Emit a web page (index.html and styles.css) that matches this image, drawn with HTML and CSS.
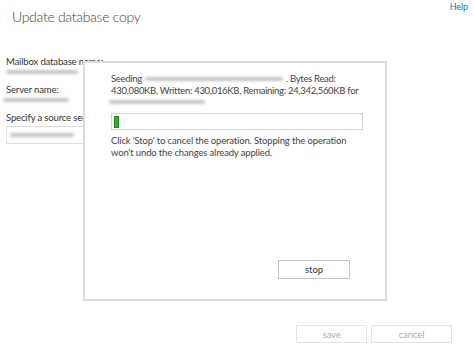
FILE: index.html
```html
<!DOCTYPE html>
<html>
<head>
<meta charset="utf-8">
<link rel="stylesheet" href="styles.css">
</head>
<body>
<div class="page">
  <div class="header">
    <h1 class="title">Update database copy</h1>
    <a class="help">Help</a>
  </div>
  <div class="form">
    <div class="label">Mailbox database name:</div>
    <div class="redact r1"></div>
    <div class="label">Server name:</div>
    <div class="redact r2"></div>
    <div class="label">Specify a source server:</div>
    <div class="input"><div class="redact r3"></div></div>
  </div>
  <div class="footer">
    <button class="btn save">save</button>
    <button class="btn cancel">cancel</button>
  </div>
</div>
<div class="dialog">
  <div class="msg">
    <div class="line1"><span>Seeding</span><span class="redact inline"></span><span>. Bytes Read:</span></div>
    <div>430,080KB, Written: 430,016KB, Remaining: 24,342,560KB for</div>
    <div class="redact r4"></div>
  </div>
  <div class="progress"><div class="fill"></div></div>
  <div class="note">Click 'Stop' to cancel the operation. Stopping the operation won't undo the changes already applied.</div>
  <div class="dlg-foot"><button class="stop">stop</button></div>
</div>
</body>
</html>
```
FILE: styles.css
```css
html, body { margin: 0; padding: 0; background: #fff; }
body { font-family: Lato, "Noto Sans", sans-serif; color: #333; width: 474px; height: 348px; overflow: hidden; position: relative; }
.page { display: flex; flex-direction: column; height: 348px; box-sizing: border-box; }
.header { display: flex; justify-content: space-between; align-items: flex-start; padding: 0 6px 0 12px; height: 26px; }
.title { margin: 8px 0 0 0; font-size: 14px; line-height: 18px; font-weight: 300; color: #444; letter-spacing: -0.3px; }
.help { font-size: 9px; color: #1f6fc0; margin-top: 1px; letter-spacing: -0.1px; }
.form { padding: 0 0 0 6px; margin-top: 29px; font-size: 9.5px; letter-spacing: -0.15px; }
.label { line-height: 13px; height: 13px; color: #333; white-space: nowrap; }
.redact { background: #c4c4c4; border-radius: 3px; filter: blur(1.5px); }
.r1 { width: 72px; height: 4px; margin: 2px 0 9px 0; }
.r2 { width: 66px; height: 4px; margin: 2px 0 9px -3px; }
.r3 { width: 64px; height: 4px; margin: 6px 0 0 3px; }
.input { width: 78px; height: 16px; border: 1px solid #ddd; margin: 2px 0 0 0; }
.footer { margin-top: auto; display: flex; justify-content: flex-end; gap: 4px; padding: 0 22px 5px 0; }
.btn { font-family: inherit; font-size: 9.5px; letter-spacing: -0.1px; color: #aaa; background: #fff; border: 1px solid #e4e4e4; height: 18px; padding: 0; }
.save { width: 71px; }
.cancel { width: 81px; }
.dialog { position: absolute; left: 83px; top: 61px; width: 304px; height: 240px; box-sizing: border-box; border: 2px solid #dcdcdc; background: #fff; padding: 10px 26px 20px 26px; display: flex; flex-direction: column; font-size: 9.5px; letter-spacing: -0.15px; line-height: 12px; color: #444; }
.msg { width: 252px; white-space: nowrap; letter-spacing: -0.3px; }
.line1 { display: flex; align-items: center; gap: 3px; }
.inline { display: block; width: 138px; height: 4px; }
.r4 { width: 96px; height: 4px; margin-top: 3px; margin-left: -2px; }
.progress { width: 247px; height: 13px; border: 1px solid #d4d4d4; margin-top: 9px; padding: 1px 1px 1px 2px; }
.fill { width: 5px; height: 12px; margin-top: 1px; background: #37a833; box-shadow: inset 0 0 0 1px #1f8a1f; }
.note { margin-top: 5px; width: 250px; }
.dlg-foot { margin-top: auto; display: flex; justify-content: flex-end; padding-right: 9px; }
.stop { font-family: inherit; font-size: 9.5px; color: #333; background: #fff; border: 1px solid #c4c4c4; width: 72px; height: 19px; padding: 0; }
```
